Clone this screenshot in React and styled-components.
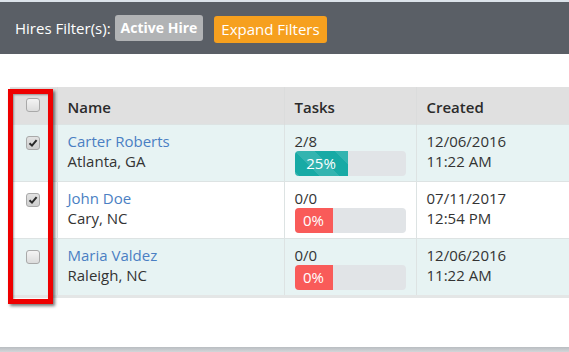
import React from 'react';
import styled, { createGlobalStyle, css } from 'styled-components';

const GlobalStyle = createGlobalStyle`
  html, body {
    margin: 0;
    padding: 0;
    background: #ffffff;
    font-family: 'Open Sans', 'Noto Sans', sans-serif;
    color: #333;
  }
`;

const Page = styled.div`
  position: relative;
  width: 569px;
  height: 352px;
  overflow: hidden;
  background: #fff;
`;

const TopStrip = styled.div`
  height: 2px;
  background: #dce3ea;
`;

const FilterBar = styled.div`
  height: 52px;
  background: #5a5f66;
  display: flex;
  align-items: center;
  padding-left: 15px;
  color: #fff;
  font-size: 15px;
`;

const FilterLabel = styled.span`
  margin-right: 4px;
`;

const Badge = styled.span`
  display: inline-flex;
  align-items: center;
  height: 26px;
  padding: 0 6px;
  border-radius: 3px;
  background: #b1b3b5;
  font-weight: 700;
  font-size: 14px;
  margin-top: -1px;
`;

const Button = styled.button`
  height: 27px;
  margin-left: 11px;
  padding: 0 7px;
  border: 0;
  border-radius: 3px;
  background: #f6a01e;
  color: #fff;
  font-family: inherit;
  font-size: 15px;
  margin-top: 2px;
`;

const Content = styled.div`
  height: 293px;
  padding: 33px 0 0 10px;
  box-sizing: border-box;
  overflow: hidden;
`;

const BottomBand = styled.div`
  height: 5px;
  background: linear-gradient(#b9bdc1, #d3d6d9);
`;

const Table = styled.table`
  border-collapse: collapse;
  table-layout: fixed;
  width: 600px;
  font-size: 15px;
  border-bottom: 3px solid #e4e6e6;
`;

const HeadRow = styled.tr`
  background: #e0e0e0;
  height: 37px;
`;

const Th = styled.th`
  text-align: left;
  font-weight: 600;
  color: #2b2b2b;
  padding: 4px 10px 0;
  border-right: 1px solid #dbdcdc;
  vertical-align: middle;
`;

const Row = styled.tr`
  background: ${({ $tint }) => ($tint ? '#e7f3f3' : '#ffffff')};
  border-top: 1px solid #dde3e3;
`;

const Td = styled.td`
  padding: 6px 10px 5px;
  line-height: 20px;
  vertical-align: top;
  border-right: 1px solid #dde3e3;
`;

const CheckCell = styled.td`
  padding: 11px 0 0 16px;
  vertical-align: top;
  border-right: 1px solid #dde3e3;
`;

const HeadCheckCell = styled.th`
  padding: 0 0 0 16px;
  text-align: left;
  vertical-align: middle;
  border-right: 1px solid #dbdcdc;
`;

const Box = styled.span`
  display: block;
  width: 12px;
  height: 12px;
  border: 1px solid #a9a9a9;
  border-radius: 3px;
  background: linear-gradient(#f4f4f4, #dcdcdc);
  position: relative;
  ${({ $checked }) =>
    $checked &&
    css`
      background: linear-gradient(#e2e2e2, #cfcfcf);
    `}
`;

const Mark = styled.svg`
  position: absolute;
  left: 1px;
  top: 1px;
`;

const Link = styled.div`
  color: #4a7fc3;
`;

const Bar = styled.div`
  width: 111px;
  height: 25px;
  border-radius: 4px;
  background: #e1e4e7;
  overflow: hidden;
  display: flex;
`;

const Fill = styled.div`
  height: 100%;
  display: flex;
  align-items: center;
  justify-content: center;
  color: #fff;
  font-size: 15px;
  background-color: ${({ $color }) => $color};
  ${({ $striped }) =>
    $striped &&
    css`
      background-image: linear-gradient(
        45deg,
        rgba(255, 255, 255, 0.12) 25%,
        transparent 25%,
        transparent 50%,
        rgba(255, 255, 255, 0.12) 50%,
        rgba(255, 255, 255, 0.12) 75%,
        transparent 75%,
        transparent
      );
      background-size: 40px 40px;
    `}
`;

const Highlight = styled.div`
  position: absolute;
  left: 8px;
  top: 89px;
  width: 45px;
  height: 215px;
  box-sizing: border-box;
  border: 5px solid #ee0000;
  box-shadow: 2px 2px 3px rgba(0, 0, 0, 0.55), inset 1px 1px 2px rgba(0, 0, 0, 0.35);
  pointer-events: none;
`;

const hires = [
  { name: 'Carter Roberts', city: 'Atlanta, GA', tasks: '2/8', pct: 25, fill: 53, checked: true, date: '12/06/2016', time: '11:22 AM' },
  { name: 'John Doe', city: 'Cary, NC', tasks: '0/0', pct: 0, fill: 38, checked: true, date: '07/11/2017', time: '12:54 PM' },
  { name: 'Maria Valdez', city: 'Raleigh, NC', tasks: '0/0', pct: 0, fill: 38, checked: false, date: '12/06/2016', time: '11:22 AM' },
];

const Checkbox = ({ checked }) => (
  <Box $checked={checked}>
    {checked && (
      <Mark width="10" height="10" viewBox="0 0 10 10">
        <path d="M1.5 5.2 L4 7.6 L8.6 2.2" fill="none" stroke="#2a2a2a" strokeWidth="2" />
      </Mark>
    )}
  </Box>
);

export default function App() {
  return (
    <>
      <GlobalStyle />
      <Page>
        <TopStrip />
        <FilterBar>
          <FilterLabel>Hires Filter(s):</FilterLabel>
          <Badge>Active Hire</Badge>
          <Button>Expand Filters</Button>
        </FilterBar>
        <Content>
          <Table>
            <colgroup>
              <col style={{ width: 47 }} />
              <col style={{ width: 227 }} />
              <col style={{ width: 132 }} />
              <col style={{ width: 194 }} />
            </colgroup>
            <thead>
              <HeadRow>
                <HeadCheckCell>
                  <Checkbox checked={false} />
                </HeadCheckCell>
                <Th>Name</Th>
                <Th>Tasks</Th>
                <Th>Created</Th>
              </HeadRow>
            </thead>
            <tbody>
              {hires.map((h, i) => (
                <Row key={h.name} $tint={i % 2 === 0}>
                  <CheckCell>
                    <Checkbox checked={h.checked} />
                  </CheckCell>
                  <Td>
                    <Link>{h.name}</Link>
                    <div>{h.city}</div>
                  </Td>
                  <Td>
                    <div>{h.tasks}</div>
                    <Bar>
                      <Fill
                        style={{ width: h.fill }}
                        $color={h.pct > 0 ? '#17aaa5' : '#f95b59'}
                        $striped={h.pct > 0}
                      >
                        {h.pct}%
                      </Fill>
                    </Bar>
                  </Td>
                  <Td>
                    <div>{h.date}</div>
                    <div>{h.time}</div>
                  </Td>
                </Row>
              ))}
            </tbody>
          </Table>
        </Content>
        <BottomBand />
        <Highlight />
      </Page>
    </>
  );
}
